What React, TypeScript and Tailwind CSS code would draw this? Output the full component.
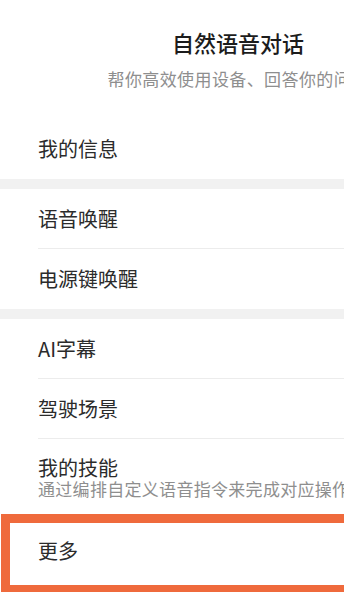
const font = { fontFamily: '"Noto Sans CJK SC", "Noto Sans", sans-serif' };

const Row = ({ label, last }: { label: string; last?: boolean }) => (
  <div className="pl-[38px]">
    <div
      className={`flex h-[60px] items-center text-[20px] text-[#2b2b2b] ${
        last ? "" : "border-b border-[#ececec]"
      }`}
    >
      {label}
    </div>
  </div>
);

const Band = () => <div className="h-[10px] bg-[#f1f1f1]" />;

export default function App() {
  return (
    <div className="h-[592px] w-[344px] overflow-hidden bg-white" style={font}>
      <div className="w-[476px]">
        <div className="flex flex-col items-center pt-[27px]">
          <h1 className="text-[22px] font-medium leading-[30px] text-[#1c1c1c]">自然语音对话</h1>
          <p className="mt-[10px] whitespace-nowrap text-[17px] leading-[24px] tracking-[0.4px] text-[#8e8e8e]">
            帮你高效使用设备、回答你的问题
          </p>
        </div>

        <div className="mt-[28px]">
          <Row label="我的信息" last />
        </div>
        <Band />
        <Row label="语音唤醒" />
        <Row label="电源键唤醒" last />
        <Band />
        <Row label="AI字幕" />
        <Row label="驾驶场景" />
        <div className="pl-[38px]">
          <div className="flex h-[75px] flex-col gap-[1px] pt-[19px]">
            <span className="text-[20px] leading-[20px] text-[#2b2b2b]">我的技能</span>
            <span className="whitespace-nowrap text-[17px] leading-[20px] tracking-[0.3px] text-[#8e8e8e]">
              通过编排自定义语音指令来完成对应操作
            </span>
          </div>
        </div>
        <div className="ml-[1px] h-[80px] border-[9px] border-[#ef6a3c] pl-[28px]">
          <div className="flex h-[56px] items-center text-[20px] text-[#2b2b2b]">更多</div>
        </div>
      </div>
    </div>
  );
}
